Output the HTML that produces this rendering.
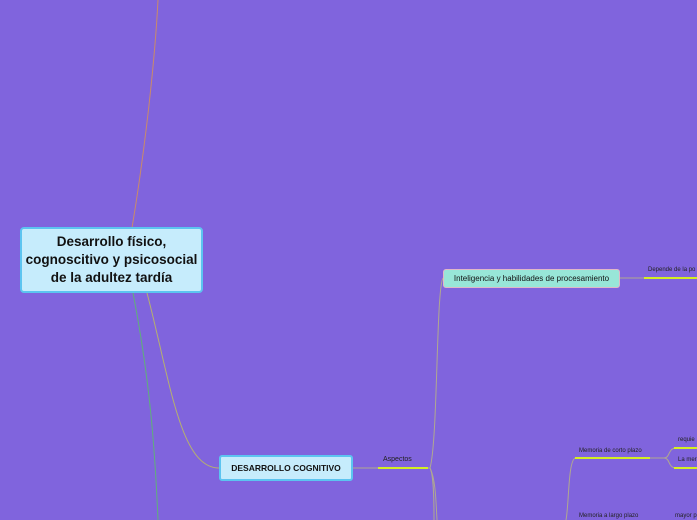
<!DOCTYPE html>
<html><head><meta charset="utf-8"><style>
body{margin:0;width:697px;height:520px;overflow:hidden;background:#8064dd;font-family:"Liberation Sans","DejaVu Sans",sans-serif;position:relative}
.b{position:absolute;box-sizing:border-box;display:flex;align-items:center;justify-content:center;text-align:center;color:#111;white-space:nowrap}
.t{position:absolute;font-size:6px;color:#222;white-space:nowrap}
</style></head><body>
<svg width="697" height="520" style="position:absolute;left:0;top:0" fill="none">
<path d="M132 228 C145 150 155 60 158 0" stroke="#c98a6a" stroke-width="1"/>
<path d="M133 293 C150 380 155 450 158 520" stroke="#5fb07a" stroke-width="1"/>
<path d="M147 293 C170 380 180 468 219 468" stroke="#b5b070" stroke-width="1"/>
<path d="M353 468 L430 468" stroke="#b0a890" stroke-width="1"/>
<path d="M378 468 L428 468" stroke="#d4ee22" stroke-width="2"/>
<path d="M430 468 C438 440 436 290 443 278" stroke="#b0a890" stroke-width="1"/>
<path d="M430 468 C436 480 436 505 437 520" stroke="#b0a890" stroke-width="1"/>
<path d="M430 468 C434 475 434 505 434 520" stroke="#b0a890" stroke-width="1"/>
<path d="M575 458 C568 462 569 505 566 520" stroke="#b0a890" stroke-width="1"/>
<path d="M619 278 L645 278" stroke="#b0a890" stroke-width="1"/>
<path d="M644 278 L697 278" stroke="#d4ee22" stroke-width="2"/>
<path d="M575 458 L650 458" stroke="#d4ee22" stroke-width="2"/>
<path d="M650 458 L664 458 C670 458 668 449 675 448 M664 458 C670 458 668 467 675 468" stroke="#b0a890" stroke-width="1"/>
<path d="M674 448 L697 448 M674 468 L697 468" stroke="#d4ee22" stroke-width="2"/>
</svg>
<div class="b" style="left:20px;top:227px;width:183px;height:66px;background:#c6ecfc;border:2px solid #5cc4f0;border-radius:4px;font-size:13.5px;font-weight:bold;line-height:18px">Desarrollo físico,<br>cognoscitivo y psicosocial<br>de la adultez tardía</div>
<div class="b" style="left:219px;top:455px;width:134px;height:26px;background:#c6ecfc;border:2px solid #5cc4f0;border-radius:3px;font-size:8.5px;font-weight:bold">DESARROLLO COGNITIVO</div>
<div class="b" style="left:443px;top:269px;width:177px;height:19px;background:#98e6d8;border:1px solid #e0b8c8;border-radius:3px;font-size:8px">Inteligencia y habilidades de procesamiento</div>
<div class="t" style="left:383px;top:456px;font-size:7px">Aspectos</div>
<div class="t" style="left:648px;top:267px">Depende de la po</div>
<div class="t" style="left:579px;top:448px">Memoria de corto plazo</div>
<div class="t" style="left:678px;top:437px">requie</div>
<div class="t" style="left:678px;top:457px">La mer</div>
<div class="t" style="left:579px;top:513px">Memoria a largo plazo</div>
<div class="t" style="left:675px;top:513px">mayor p</div>
</body></html>
